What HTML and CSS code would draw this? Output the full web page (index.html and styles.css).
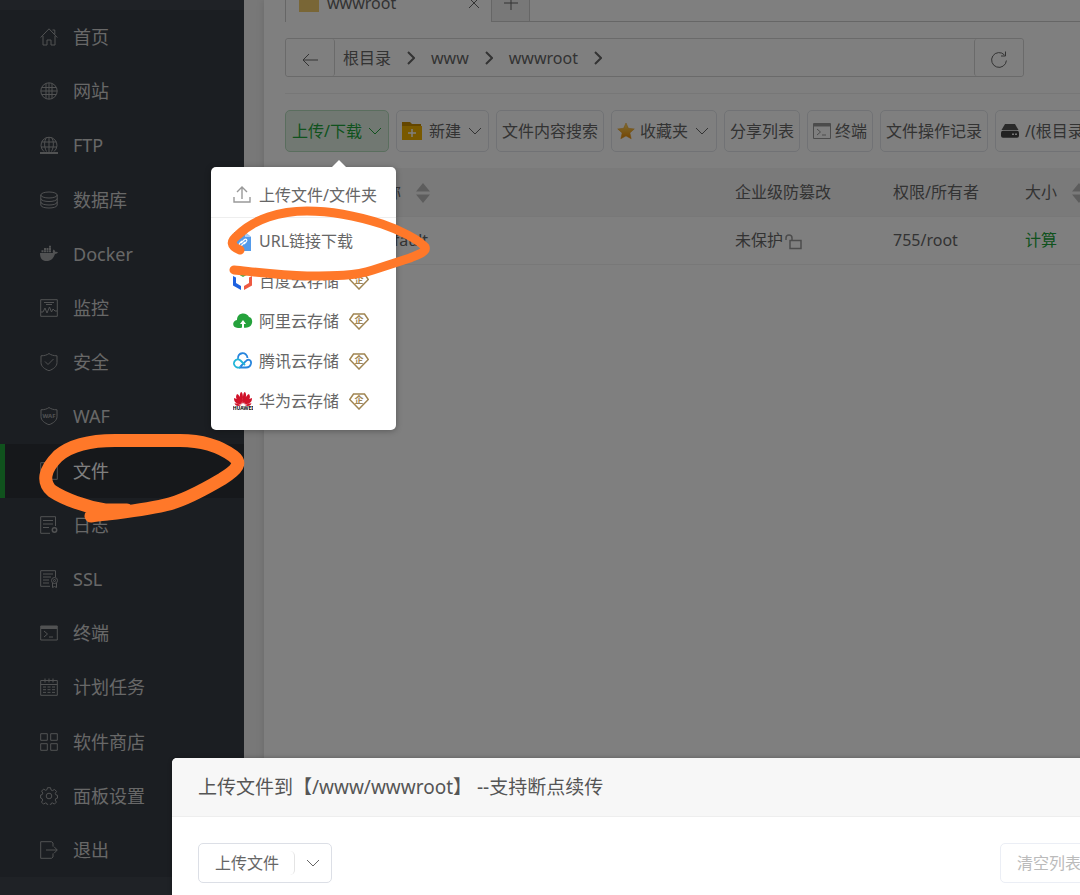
FILE: index.html
```html
<!DOCTYPE html>
<html lang="zh-CN">

<head>
    <meta charset="UTF-8">
    <meta name="viewport" content="width=device-width, initial-scale=1.0">
    <link rel="stylesheet" href="styles.css">
    <title>文件</title>
</head>

<body>
    <div class="layout">
        <nav class="sidebar">
            <ul class="menu">
                <li><a href="#">
                    <svg class="icon" viewBox="0 0 18 18"><path d="M.7 9.5 9 .8l8.3 8.7M12.5 2h2.3v4.5M3 8v9h4v-5h4v5h4V8"/></svg>
                    首页</a></li>
                <li><a href="#">
                    <svg class="icon" viewBox="0 0 18 18"><circle cx="9" cy="9" r="8.2"/><path d="M6 1.500v15M12 1.500v15M9 1v16M1 9h16M2 5.500h14M2 12.500h14"/></svg>
                    网站</a></li>
                <li><a href="#">
                    <svg class="icon" viewBox="0 0 18 18"><path d="M4 15.5a8 8 0 1 1 10 0M9 1v15M6.5 15.5C4 11 4 5 6.5 1.5M11.500 15.5c2.500-4.500 2.500-10.500 0-14M1.500 6h15M1.200 11h15.600"/><path d="M0 17h18" stroke-width="2"/></svg>
                    FTP</a></li>
                <li><a href="#">
                    <svg class="icon" viewBox="0 0 18 18"><ellipse cx="9" cy="4" rx="8.200" ry="3"/><path d="M.8 4v10c0 4 16.400 4 16.400 0V4M.8 7.500c0 4 16.400 4 16.400 0M.8 11c0 4 16.400 4 16.400 0"/></svg>
                    数据库</a></li>
                <li><a href="#">
                    <svg class="icon solid" viewBox="0 0 18 18"><path d="M0 8h13c-.5-1.500-.3-2.500.6-3.500 1 .6 1.400 1.300 1.500 2.300 1-.3 2-.2 2.900.4-.7 1.300-1.700 1.700-3 1.700C13.500 13.500 11 16 6.500 16 2 16 0 13 0 8z"/><path d="M1.500 5.300h2v2h-2zM4 5.300h2v2H4zM6.500 5.300h2v2h-2zM9 5.300h2v2H9zM4 3h2v2H4zM6.500 3h2v2h-2zM9 3h2v2H9zM9 .8h2v2H9z"/></svg>
                    Docker</a></li>
                <li><a href="#">
                    <svg class="icon" viewBox="0 0 18 18"><path d="M.7.700h16.600v16.600H.7zM4 3.500h10M6 5.500h6M1 13h2l2-4 2 5 2.500-6 2 5 1.500-3 2 2h2"/></svg>
                    监控</a></li>
                <li><a href="#">
                    <svg class="icon" viewBox="0 0 18 18"><path d="M9 .500c2 1.500 4.500 2.300 8 2.300v6.700c0 4-3.500 6.500-8 8.300-4.500-1.800-8-4.300-8-8.300V2.800C4.500 2.800 7 2 9 .500zM5 8.500l3 3 5.500-5.500"/></svg>
                    安全</a></li>
                <li><a href="#">
                    <svg class="icon" viewBox="0 0 18 18"><path d="M9 .500c2 1.500 4.500 2.300 8 2.300v6.700c0 4-3.500 6.500-8 8.300-4.500-1.800-8-4.300-8-8.300V2.800C4.500 2.800 7 2 9 .500z"/><text x="9" y="10.500" class="waf-text">WAF</text></svg>
                    WAF</a></li>
                <li class="active"><a href="#">
                    <svg class="icon" viewBox="0 0 18 18"><path d="M.7.700h6l2 3h8.600v13.600H.7zM4 8h10M12 8v5"/></svg>
                    文件</a></li>
                <li><a href="#">
                    <svg class="icon" viewBox="0 0 18 18"><path d="M15.500 10V.700H.7v16.600H10M3 4.500h10M3 8h10M3 11.500h6"/><circle cx="14.500" cy="14" r="2.200" stroke-width="1.500"/></svg>
                    日志</a></li>
                <li><a href="#">
                    <svg class="icon" viewBox="0 0 18 18"><path d="M15.500 7V.700H.7v15.600H10M3 4h10M3 7h8M3 10h6M3 13h6M12.500 13v4.500l2-1 2 1V13"/><circle cx="14.500" cy="10.500" r="3"/><circle cx="14.500" cy="10.500" r="1"/></svg>
                    SSL</a></li>
                <li><a href="#">
                    <svg class="icon" viewBox="0 0 18 18"><path d="M.7 2h16.600v14H.7zM4 7l3.500 3L4 13M9 13h4"/><path d="M1 3.500h16" stroke-width="3"/></svg>
                    终端</a></li>
                <li><a href="#">
                    <svg class="icon" viewBox="0 0 18 18"><path d="M.7 2.500h16.600v14.800H.7zM.7 6.500h16.600M5 .500v4M9 .500v4M13 .500v4"/><path d="M3 9h12M3 11.700h12M3 14.400h12" stroke-dasharray="3 1.500"/></svg>
                    计划任务</a></li>
                <li><a href="#">
                    <svg class="icon" viewBox="0 0 18 18"><path d="M.7.700h6.600v6.600H.7zM10.700.700h6.600v6.600h-6.600zM.7 10.700h6.600v6.600H.7zM10.700 10.700h6.600v6.600h-6.600z"/></svg>
                    软件商店</a></li>
                <li><a href="#">
                    <svg class="icon" viewBox="0 0 18 18"><path d="M7.500.700h3l.5 2.200 1.500.7 2-1.200 2 2-1.200 2 .6 1.500 1.600.4v2.800l-1.700.5-.6 1.500 1.200 2-2 2-2-1.200-1.400.6-.5 1.900h-3l-.5-1.900-1.500-.6-2 1.200-2-2 1.200-2-.6-1.500L.6 11V8l1.600-.4.600-1.500-1.200-2 2-2 2 1.200 1.400-.6z"/><circle cx="9" cy="9" r="2.800"/></svg>
                    面板设置</a></li>
                <li><a href="#">
                    <svg class="icon" viewBox="0 0 18 18"><path d="M13 5.500V2L11.500.700H.7v16.600h10.800L13 16v-3.500M6 9h11M14 5.700 17.300 9 14 12.300"/></svg>
                    退出</a></li>
            </ul>
        </nav>

        <main class="content">
            <div class="tabs">
                <div class="tab">
                    <svg class="tab-folder" viewBox="0 0 20 20"><path d="M0 1h8l2 3h10v15H0z" fill="#ffd76e"/><path d="M0 7h20v12H0z" fill="#f3cd6c"/></svg>
                    <span>wwwroot</span>
                    <button class="tab-close" aria-label="关闭"><svg class="line" width="12" height="12" viewBox="0 0 12 12"><path d="m1 1 10 10M11 1 1 11"/></svg></button>
                </div>
                <button class="tab-add" aria-label="新增"><svg class="line" width="14" height="14" viewBox="0 0 14 14"><path d="M7 0v14M0 7h14"/></svg></button>
            </div>

            <div class="path-bar">
                <button class="path-btn" aria-label="后退"><svg class="line" width="16" height="14" viewBox="0 0 16 14"><path d="M16 7H1M7 1 1 7l6 6"/></svg></button>
                <div class="crumbs">
                    <a href="#">根目录</a>
                    <svg class="sep" viewBox="0 0 8 14"><path d="m1 1 6 6-6 6"/></svg>
                    <a href="#">www</a>
                    <svg class="sep" viewBox="0 0 8 14"><path d="m1 1 6 6-6 6"/></svg>
                    <a href="#">wwwroot</a>
                    <svg class="sep" viewBox="0 0 8 14"><path d="m1 1 6 6-6 6"/></svg>
                </div>
                <button class="path-btn refresh" aria-label="刷新"><svg class="line" width="18" height="18" viewBox="0 0 18 18"><path d="M14.500 4A7.400 7.400 0 1 0 16.400 9.500M15.500.500V5H11"/></svg></button>
            </div>

            <div class="toolbar">
                <button class="btn upload">上传/下载 <svg class="arrow" viewBox="0 0 14 8"><path d="m1 1 6 6 6-6"/></svg></button>
                <button class="btn create">
                    <svg width="20" height="18" viewBox="0 0 20 18"><path d="M0 0h8l2 2h9v4H0z" fill="#c98c00"/><path d="M0 4h20v14H0z" fill="#f3b300"/><path d="M10 7v8M6 11h8" stroke="#fff" stroke-width="1.500"/></svg>
                    新建 <svg class="arrow" viewBox="0 0 14 8"><path d="m1 1 6 6 6-6"/></svg></button>
                <button class="btn">文件内容搜索</button>
                <button class="btn star">
                    <svg width="18" height="18" viewBox="0 0 18 18"><defs><linearGradient id="gold" x2="0" y2="1"><stop offset="0" stop-color="#ffdb66"/><stop offset="1" stop-color="#e88700"/></linearGradient></defs><path d="m9 1 2.400 5.300 5.900.6-4.400 4 1.300 5.900L9 13.900l-5.200 2.900 1.300-5.900-4.400-4 5.900-.6z" fill="url(#gold)" stroke="#e69a20" stroke-width=".5"/></svg>
                    收藏夹 <svg class="arrow" viewBox="0 0 14 8"><path d="m1 1 6 6 6-6"/></svg></button>
                <button class="btn">分享列表</button>
                <button class="btn term">
                    <svg class="line" width="18" height="18" viewBox="0 0 18 18"><path d="M.500 1.500h17v15H.500zM4 7l3.500 3L4 13M9 13h4"/><path d="M1 3h16" stroke-width="3"/></svg>
                    终端</button>
                <button class="btn">文件操作记录</button>
                <button class="btn disk">
                    <svg width="18" height="14" viewBox="0 0 18 14"><path d="M4 0h10l3.500 6H.500z" fill="#555"/><rect y="6.800" width="18" height="7" rx="2" fill="#444"/><path d="M11 10.300h2M14 10.300h2" stroke="#eee" stroke-width="1.500"/></svg>
                    /(根目录)</button>
            </div>

            <table class="files">
                <thead>
                    <tr>
                        <th class="name">名称 <svg class="sort" viewBox="0 0 14 20"><path d="m7 0 7 8.500H0zM7 20l7-8.500H0z"/></svg></th>
                        <th class="protect">企业级防篡改</th>
                        <th class="perm">权限/所有者</th>
                        <th class="size">大小 <svg class="sort" viewBox="0 0 14 20"><path d="m7 0 7 8.500H0zM7 20l7-8.500H0z"/></svg></th>
                    </tr>
                </thead>
                <tbody>
                    <tr>
                        <td class="filename">default</td>
                        <td>未保护<svg class="lock" viewBox="0 0 17 16"><path d="M5 6.500h11v8H5zM1 6V4c0-4 6-4 6 0v2.500"/></svg></td>
                        <td>755/root</td>
                        <td><a href="#" class="calc">计算</a></td>
                    </tr>
                </tbody>
            </table>
        </main>
    </div>

    <div class="mask"></div>

    <ul class="dropdown">
        <li class="first"><a href="#">
            <svg class="logo" viewBox="0 0 20 20"><path d="M9 14V2M4 7l5-5 5 5M1 12v5h16v-5" fill="none" stroke="#999" stroke-width="1.400"/></svg>
            上传文件/文件夹</a></li>
        <li><a href="#">
            <svg class="logo" viewBox="0 0 20 20"><path d="M1 1h11l6 5v14H1z" fill="#549bea"/><path d="M12 1v5h6z" fill="#a9cef7"/><path d="m8 11 3-3c2-2 4 0 2 2l-2 2M12 10l-3 3c-2 2-4 0-2-2l2-2" transform="translate(0 1)" fill="none" stroke="#fff" stroke-width="1.200"/></svg>
            URL链接下载</a></li>
        <li><a href="#">
            <svg class="logo" viewBox="0 0 20 20"><path d="m10 0 5 3-5 3-5-3z" fill="#35b34a"/><path d="M0 5l3 1.500V12l5 3v4l-8-4.500z" fill="#1e62e0"/><path d="m19 5-3 1.500V12l-5 3v4l8-4.500z" fill="#ee5a42"/></svg>
            百度云存储
            <svg class="gem" viewBox="0 0 20 17"><path d="M4.500 1h11L19.300 6.500 10 16 .7 6.500z"/><text x="10" y="10">企</text></svg></a></li>
        <li><a href="#">
            <svg class="logo" viewBox="0 0 20 20"><path d="M5 17C-1.500 17-1 9.500 4 9 4 1 14 1 16 6c5 1 4 10-2 10.500-2 .3-3 .3-3 .3V13h2l-3-4-3 4h2v3.500c-1 .5-2 .5-4 .5z" fill="#25a23c"/></svg>
            阿里云存储
            <svg class="gem" viewBox="0 0 20 17"><path d="M4.500 1h11L19.300 6.500 10 16 .7 6.500z"/><text x="10" y="10">企</text></svg></a></li>
        <li><a href="#">
            <svg class="logo" viewBox="0 0 20 20"><g fill="none" stroke-width="1.800"><path d="M5 8C4 1 14 0 14.500 7" stroke="#2785dd"/><path d="m7.500 15.500 5-5c3-3.500 6-1 5.500 2-.5 2.500-2 4-5 4H6" stroke="#2785dd"/><path d="M12 14 7.500 9.500C4 6.500.5 10 1 13c.5 2.500 3 4 6 3.500" stroke="#21b5d8"/></g></svg>
            腾讯云存储
            <svg class="gem" viewBox="0 0 20 17"><path d="M4.500 1h11L19.300 6.500 10 16 .7 6.500z"/><text x="10" y="10">企</text></svg></a></li>
        <li><a href="#">
            <svg class="logo" viewBox="0 0 20 20"><g fill="#d0132a"><path d="M9.700 13C7 8 6 3 8 1c2 0 2.500 6 1.700 12zM10.300 13C13 8 14 3 12 1c-2 0-2.500 6-1.700 12zM9 13C3 9 2 6 4 3c3 1 4.500 6 5 10zM11 13c6-4 7-7 5-10-3 1-4.500 6-5 10zM8.500 13.500C3 13 1 11 1 7c4 1 6 4 7.500 6.500zM11.500 13.500C17 13 19 11 19 7c-4 1-6 4-7.500 6.500zM8 14.200c-3 1.300-5.500.8-6.500-1.900 2.500.2 4 .7 6.500 1.900zM12 14.200c3 1.300 5.500.8 6.500-1.900-2.500.2-4 .7-6.500 1.900z"/></g><text x="10" y="19" class="brand">HUAWEI</text></svg>
            华为云存储
            <svg class="gem" viewBox="0 0 20 17"><path d="M4.500 1h11L19.300 6.500 10 16 .7 6.500z"/><text x="10" y="10">企</text></svg></a></li>
    </ul>

    <section class="dialog">
        <h2>上传文件到【/www/wwwroot】 --支持断点续传</h2>
        <div class="dialog-body">
            <div class="split">
                <button class="split-main">上传文件</button>
                <button class="split-more" aria-label="更多"><svg class="arrow" viewBox="0 0 14 8"><path d="m1 1 6 6 6-6"/></svg></button>
            </div>
            <button class="clear" disabled>清空列表</button>
        </div>
    </section>

    <!-- hand drawn marks -->
    <svg class="marks" width="1080" height="895" viewBox="0 0 1080 895">
        <path stroke-width="13" d="M127 510 105 510C86 507 64 499 52 491C42 482 44 470 58 456C72 444 92 440.500 115 440.500H180C204 440.500 222 448 233 456C242 463 238 469 222 479C200 492 180 502 165 505C140 511 115 513 91 516"/>
        <path stroke-width="9" d="M240 250C230 246 230 241 238 235C254 219 280 211 307 211C335 211 360 217 382 224C400 230 419 240 425 247C427 252 417 255 410 258L373 270C355 276 335 276 307 276C280 275 255 272 234 270"/>
    </svg>
</body>

</html>
```
FILE: styles.css
```css
* {
    margin: 0;
    padding: 0;
    box-sizing: border-box;
    font-family: "Noto Sans", "Noto Sans CJK SC", sans-serif;
}

body {
    height: 100vh;
    overflow: hidden;
    position: relative;
    background: #fff;
    color: #666;
    font-size: 16px;
    line-height: 24px;
}

a {
    color: inherit;
    text-decoration: none;
}

ul {
    list-style-type: none;
}

button {
    font-size: 16px;
    line-height: 24px;
    color: #666;
    background: #fff;
    border: none;
    white-space: nowrap;
    cursor: pointer;
}

svg {
    flex-shrink: 0;
}

.line {
    fill: none;
    stroke: #666;
}

.arrow {
    width: 14px;
    height: 8px;
    fill: none;
    stroke: currentColor;
}

.layout {
    display: flex;
    height: 100%;
}

/*--------sidebar-------*/

.sidebar {
    width: 244px;
    flex-shrink: 0;
    padding: 10px 0 18px;
    background-color: #3e444c;
}

.menu {
    height: 100%;
    display: flex;
    flex-direction: column;
    background-color: #363c44;
}

.menu li {
    flex: 1;
}

.menu a {
    height: 100%;
    display: flex;
    align-items: center;
    gap: 15px;
    padding-left: 40px;
    font-size: 18px;
    color: #d0d0d0;
}

.menu .active {
    background-color: #2d3036;
}

.menu .active a {
    padding-left: 35px;
    border-left: 5px solid #20a53a;
    color: #fff;
}

.icon {
    width: 18px;
    height: 18px;
    fill: none;
    stroke: #a2a4a6;
}

.icon.solid {
    fill: #a2a4a6;
    stroke: none;
}

.waf-text {
    font-size: 6px;
    font-weight: 700;
    text-anchor: middle;
    fill: #a2a4a6;
    stroke: none;
}

/*--------files-------*/

.content {
    flex: 1;
    min-width: 0;
    overflow: hidden;
    margin-left: 20px;
    padding-left: 21px;
    box-shadow: 0 0 8px rgba(0, 0, 0, .12), -20px 0 0 #f0f0f0;
}

.tabs {
    display: flex;
    height: 38px;
    margin-top: -16px;
    border-bottom: 1px solid #ccc;
}

.tab {
    width: 207px;
    height: 38px;
    display: flex;
    align-items: center;
    padding: 0 11px 2px 13px;
    gap: 8px;
    background: #fff;
    border: 1px solid #ccc;
    border-bottom: none;
}

.tab-folder {
    width: 20px;
    height: 20px;
}

.tab-close {
    display: flex;
    margin-left: auto;
}

.tab-add {
    width: 38px;
    display: flex;
    align-items: center;
    justify-content: center;
    background: #f0f0f0;
    border-right: 1px solid #ccc;
}

.path-bar {
    display: flex;
    height: 39px;
    margin: 16px 56px 16px 0;
    border: 1px solid #d4d4d4;
    border-radius: 3px;
}

.path-btn {
    width: 49px;
    display: flex;
    align-items: center;
    justify-content: center;
    padding-top: 4px;
    border-right: 1px solid #d4d4d4;
    border-radius: 3px;
}

.refresh {
    border-right: none;
    border-left: 1px solid #d4d4d4;
}

.crumbs {
    flex: 1;
    display: flex;
    align-items: center;
    gap: 16px;
    padding-left: 8px;
}

.sep {
    width: 8px;
    height: 14px;
    fill: none;
    stroke: #666;
    stroke-width: 2;
}

.toolbar {
    display: flex;
    gap: 7px;
    padding: 16px 0;
    border-top: 1px solid #eee;
}

.btn {
    height: 42px;
    flex-shrink: 0;
    display: flex;
    align-items: center;
    gap: 4px;
    padding: 0 5px;
    border: 1px solid #e2e5ea;
    border-radius: 5px;
}

.upload {
    gap: 6px;
    padding: 0 6px;
    color: #20a53a;
    background: #e2f1e5;
    border-color: #b5dcbd;
}

.create {
    gap: 7px;
    padding-right: 6px;
}

.star {
    gap: 7px;
    padding-right: 7px;
}

.star svg:first-child {
    margin-right: -2px;
}

.term .line {
    stroke: #999;
}

.disk {
    gap: 6px;
}

.files {
    width: 100%;
    table-layout: fixed;
    border-collapse: collapse;
}

.files th,
.files td {
    height: 48px;
    padding: 0 8px;
    text-align: left;
    font-weight: 400;
    white-space: nowrap;
    border-bottom: 1px solid #f0f0f0;
}

.files th {
    background: #f5f5f5;
}

.files .name {
    padding-left: 84px;
}

.files .filename {
    padding-left: 90px;
}

.protect {
    width: 158px;
}

.perm {
    width: 132px;
}

.size {
    width: 63px;
}

.sort {
    width: 14px;
    height: 20px;
    margin-left: 11px;
    vertical-align: middle;
    fill: #bbb;
}

.lock {
    width: 17px;
    height: 16px;
    margin-left: 2px;
    vertical-align: middle;
    fill: none;
    stroke: #999;
    stroke-width: 1.5;
}

.calc {
    color: #20a53a;
}

.mask {
    position: absolute;
    inset: 0;
    background: rgba(0, 0, 0, .5);
}

/*--------dropdown-------*/

.dropdown {
    position: absolute;
    top: 167px;
    left: 211px;
    width: 185px;
    padding: 6px 0 9px;
    background: #fff;
    border-radius: 5px;
    box-shadow: 0 1px 6px rgba(0, 0, 0, .3);
}

.dropdown::before {
    content: "";
    position: absolute;
    top: -7px;
    left: 121px;
    border: 7px solid transparent;
    border-top: none;
    border-bottom-color: #fff;
}

.dropdown a {
    height: 40px;
    display: flex;
    align-items: center;
    gap: 6px;
    padding-left: 22px;
    white-space: nowrap;
}

.dropdown .first {
    margin-bottom: 3px;
    border-bottom: 1px solid #eee;
}

.dropdown .first a {
    height: 44px;
}

.logo {
    width: 20px;
    height: 20px;
}

.brand {
    font-size: 5px;
    font-weight: 700;
    text-anchor: middle;
}

.gem {
    width: 20px;
    height: 17px;
    margin-left: 4px;
    fill: none;
    stroke: #a08552;
    stroke-width: 1.5;
}

.gem text {
    font-size: 9px;
    font-weight: 700;
    text-anchor: middle;
    fill: #a08552;
    stroke: none;
}

/*--------upload dialog-------*/

.dialog {
    position: absolute;
    left: 172px;
    right: -44px;
    bottom: 0;
    background: #fff;
    border-radius: 5px 5px 0 0;
    box-shadow: 0 0 4px rgba(0, 0, 0, .3);
}

.dialog h2 {
    padding: 16px 26px;
    font-size: 19px;
    font-weight: 400;
    line-height: 26px;
    color: #555;
    background: #f7f7f7;
    border-bottom: 1px solid #eee;
    border-radius: 5px 5px 0 0;
}

.dialog-body {
    display: flex;
    justify-content: space-between;
    padding: 26px 26px 12px;
}

.split {
    display: flex;
    height: 40px;
    align-items: center;
    border: 1px solid #dcdfe6;
    border-radius: 5px;
}

.split-main {
    padding: 0 15px 0 16px;
    border-radius: 5px;
    border-right: 1px solid #e4e4e4;
}

.split-more {
    width: 36px;
    display: flex;
    justify-content: center;
    border-radius: 5px;
}

.clear {
    height: 40px;
    padding: 0 16px;
    color: #bbb;
    border: 1px solid #ebeef5;
    border-radius: 5px;
}

.marks {
    position: absolute;
    top: 0;
    left: 0;
    fill: none;
    stroke: #ff7829;
    stroke-linecap: round;
    stroke-linejoin: round;
    pointer-events: none;
}
```
